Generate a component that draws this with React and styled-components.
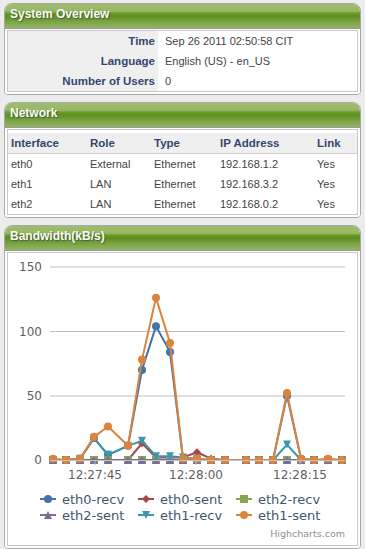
import React from "react";
import styled, { createGlobalStyle } from "styled-components";

const GlobalStyle = createGlobalStyle`
  body {
    margin: 0;
    background: #ececec;
    font-family: "Liberation Sans", Arial, sans-serif;
  }
`;

const Page = styled.div`
  display: flex;
  flex-direction: column;
  gap: 7px;
  padding: 3px 4px 0 4px;
`;

const Panel = styled.section`
  border: 1px solid #a9a9a9;
  border-radius: 8px 8px 4px 4px;
  background: #fff;
  overflow: hidden;
`;

const Header = styled.div`
  height: 24px;
  line-height: 21px;
  padding-left: 5px;
  color: #fbfbee;
  font-size: 12px;
  font-weight: bold;
  text-shadow: 1px 1px 1px rgba(40, 60, 80, 0.6);
  background: linear-gradient(
    to bottom,
    #9dbd6f 0%,
    #98b867 30%,
    #6c9c2a 38%,
    #5d8f1b 50%,
    #7ca448 75%,
    #93b563 100%
  );
  border-bottom: 1px solid #9a9a9a;
`;

const Body = styled.div`
  padding: 1px 2px 2px 2px;
  background: #fff;
`;

const Inner = styled.div`
  border: 1px solid #c9c9c9;
  padding-top: ${(p) => p.$pt || 0}px;
`;

const InfoRow = styled.div`
  display: grid;
  grid-template-columns: 150px 1fr;
  height: 20px;
  font-size: 11px;
`;

const InfoLabel = styled.div`
  background: #efefef;
  color: #344670;
  font-weight: bold;
  font-size: 11.5px;
  text-align: right;
  padding-right: 3px;
  line-height: 20px;
`;

const InfoValue = styled.div`
  color: #444;
  padding-left: 7px;
  line-height: 20px;
`;

const NetRow = styled.div`
  display: grid;
  grid-template-columns: 79px 64px 66px 97px 1fr;
  height: 20px;
  line-height: 20px;
  padding-left: 3px;
  font-size: ${(p) => (p.$head ? 11.5 : 11)}px;
  font-weight: ${(p) => (p.$head ? "bold" : "normal")};
  color: ${(p) => (p.$head ? "#344670" : "#444")};
  background: ${(p) => (p.$head ? "#efefef" : "#fff")};
  border-bottom: ${(p) => (p.$head ? "1px solid #d0d0d0" : "none")};
`;

const ChartSvg = styled.svg`
  display: block;
  font-family: "DejaVu Sans", Verdana, sans-serif;
`;

const xs = [53, 66, 80, 94, 108, 128, 142, 156, 170, 183, 197, 211, 225, 246, 259, 273, 287, 301, 314, 328, 342];
const zero = xs.map(() => 0);

const series = [
  { name: "eth0-recv", color: "#4572A7", marker: "circle", data: [0, 0, 1, 17, 4, 11, 70, 104, 84, 1, 0, 0, 0, 0, 0, 0, 50, 1, 0, 0, 0] },
  { name: "eth0-sent", color: "#AA4643", marker: "diamond", data: [0, 0, 0, 0, 0, 0, 13, 2, 2, 2, 6, 1, 0, 0, 0, 0, 0, 0, 0, 0, 0] },
  { name: "eth2-recv", color: "#89A54E", marker: "square", data: zero },
  { name: "eth2-sent", color: "#80699B", marker: "triangle", data: zero },
  { name: "eth1-recv", color: "#3D96AE", marker: "triangle-down", data: [0, 0, 1, 17, 4, 11, 15, 3, 3, 2, 1, 0, 0, 0, 0, 0, 12, 0, 0, 0, 0] },
  { name: "eth1-sent", color: "#DB843D", marker: "circle", data: [1, 0, 1, 18, 26, 11, 78, 126, 91, 1, 1, 0, 0, 0, 0, 0, 52, 1, 0, 1, 0] },
];

const Y0 = 459;
const yOf = (v) => Y0 - v * 1.287;

function Marker({ type, x, y, color }) {
  if (type === "circle") return <circle cx={x} cy={y} r={4} fill={color} />;
  if (type === "square") return <rect x={x - 4} y={y - 4} width={8} height={8} fill={color} />;
  if (type === "diamond") return <path d={`M${x} ${y - 4}L${x + 4} ${y}L${x} ${y + 4}L${x - 4} ${y}Z`} fill={color} />;
  if (type === "triangle") return <path d={`M${x} ${y - 4}L${x + 4} ${y + 4}L${x - 4} ${y + 4}Z`} fill={color} />;
  return <path d={`M${x - 4} ${y - 4}L${x + 4} ${y - 4}L${x} ${y + 4}Z`} fill={color} />;
}

// legend order: row 1 eth0-recv, eth0-sent, eth2-recv; row 2 eth2-sent, eth1-recv, eth1-sent
const legendPos = [
  [48, 498], [146, 498], [244, 498],
  [48, 514], [146, 514], [244, 514],
];

function Chart() {
  return (
    <ChartSvg width="349" height="292" viewBox="8 252 349 292">
      <rect x="8" y="252" width="349" height="292" fill="#fff" />
      {[266, 330.5, 395].map((y) => (
        <line key={y} x1="50" x2="345" y1={y} y2={y} stroke="#c0c0c0" strokeWidth="1" />
      ))}
      {[["150", 266], ["100", 330.5], ["50", 395], ["0", 459]].map(([t, y]) => (
        <text key={t} x="42" y={y + 4} fontSize="12" fill="#606060" textAnchor="end">
          {t}
        </text>
      ))}
      {series.map((s) => (
        <g key={s.name}>
          <polyline
            points={s.data.map((v, i) => `${xs[i]},${yOf(v)}`).join(" ")}
            fill="none"
            stroke={s.color}
            strokeWidth="2"
            strokeLinejoin="round"
          />
          {s.data.map((v, i) => (
            <Marker key={i} type={s.marker} x={xs[i]} y={yOf(v)} color={s.color} />
          ))}
        </g>
      ))}
      <line x1="50" x2="345" y1="459.5" y2="459.5" stroke="#b8c4d0" strokeWidth="1" />
      {[["12:27:45", 95], ["12:28:00", 196], ["12:28:15", 300]].map(([t, x]) => (
        <g key={t}>
          <line x1={x} x2={x} y1="459" y2="464" stroke="#b8c4d0" />
          <text x={x} y="478" fontSize="12" fill="#606060" textAnchor="middle">
            {t}
          </text>
        </g>
      ))}
      {series.map((s, i) => {
        const [x, y] = legendPos[i];
        return (
          <g key={s.name}>
            <line x1={x - 8} x2={x + 8} y1={y} y2={y} stroke={s.color} strokeWidth="2" />
            <Marker type={s.marker} x={x} y={y} color={s.color} />
            <text x={x + 14} y={y + 4.5} fontSize="13" fill="#3E576F">
              {s.name}
            </text>
          </g>
        );
      })}
      <text x="345" y="536" fontSize="9.5" fill="#909090" textAnchor="end">
        Highcharts.com
      </text>
    </ChartSvg>
  );
}

const info = [
  ["Time", "Sep 26 2011 02:50:58 CIT"],
  ["Language", "English (US) - en_US"],
  ["Number of Users", "0"],
];

const nets = [
  ["eth0", "External", "Ethernet", "192.168.1.2", "Yes"],
  ["eth1", "LAN", "Ethernet", "192.168.3.2", "Yes"],
  ["eth2", "LAN", "Ethernet", "192.168.0.2", "Yes"],
];

export default function App() {
  return (
    <>
      <GlobalStyle />
      <Page>
        <Panel>
          <Header>System Overview</Header>
          <Body>
            <Inner>
              {info.map(([k, v]) => (
                <InfoRow key={k}>
                  <InfoLabel>{k}</InfoLabel>
                  <InfoValue>{v}</InfoValue>
                </InfoRow>
              ))}
            </Inner>
          </Body>
        </Panel>
        <Panel>
          <Header>Network</Header>
          <Body>
            <Inner $pt={3}>
              <NetRow $head>
                <div>Interface</div>
                <div>Role</div>
                <div>Type</div>
                <div>IP Address</div>
                <div>Link</div>
              </NetRow>
              {nets.map((r) => (
                <NetRow key={r[0]}>
                  {r.map((c, i) => (
                    <div key={i}>{c}</div>
                  ))}
                </NetRow>
              ))}
            </Inner>
          </Body>
        </Panel>
        <Panel>
          <Header>Bandwidth(kB/s)</Header>
          <Body>
            <Inner>
              <Chart />
            </Inner>
          </Body>
        </Panel>
      </Page>
    </>
  );
}
